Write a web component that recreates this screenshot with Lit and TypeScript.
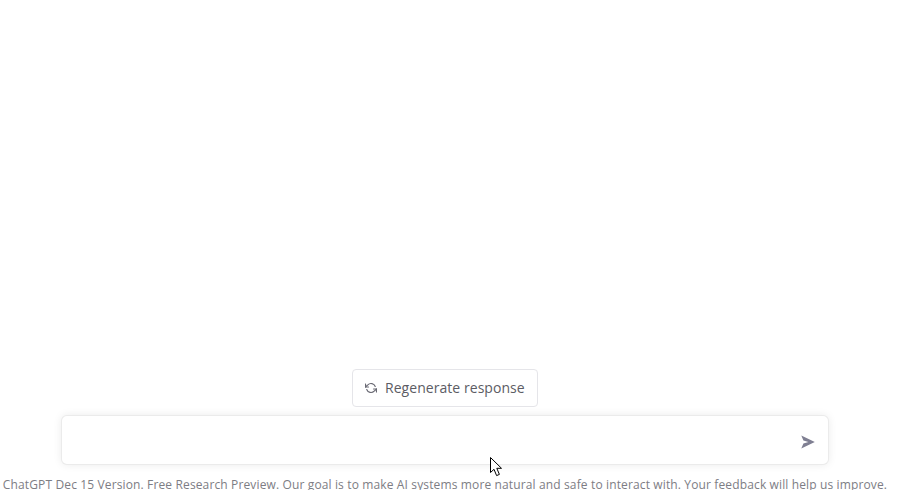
import { LitElement, html, css } from "lit";
import { customElement } from "lit/decorators.js";

@customElement("app-root")
export class AppRoot extends LitElement {
  static styles = css`
    :host {
      display: flex;
      flex-direction: column;
      align-items: center;
      position: relative;
      width: 897px;
      height: 490px;
      overflow: hidden;
      background: #fff;
      font-family: "Open Sans", "Noto Sans", sans-serif;
    }

    .spacer {
      flex: 1;
    }

    .regen {
      display: flex;
      align-items: center;
      gap: 8px;
      box-sizing: border-box;
      width: 186px;
      height: 38px;
      margin-left: -7px;
      padding: 0 12px;
      border: 1px solid #e5e5e9;
      border-radius: 4px;
      background: #fff;
      color: #5c5c64;
      font: inherit;
      font-size: 14px;
      letter-spacing: 0.05px;
      white-space: nowrap;
    }

    .regen span {
      margin-bottom: 2px;
    }

    .regen svg {
      flex: none;
      width: 12px;
      height: 12px;
      color: #6a6a74;
    }

    .input {
      display: flex;
      align-items: center;
      justify-content: flex-end;
      box-sizing: border-box;
      width: 768px;
      height: 50px;
      margin-top: 8px;
      margin-left: -7px;
      padding: 4px 13px 0 0;
      border: 1px solid rgba(0, 0, 0, 0.08);
      border-radius: 6px;
      background: #fff;
      box-shadow: 0 0 8px rgba(0, 0, 0, 0.08);
    }

    .input svg {
      width: 14px;
      height: 14px;
      color: #7f7f92;
    }

    .note {
      margin-top: 12px;
      height: 13px;
      color: #7d7d84;
      font-size: 12px;
      letter-spacing: 0.134px;
      line-height: 15px;
      white-space: nowrap;
      margin-left: -7px;
    }

    .cursor {
      position: absolute;
      left: 490px;
      top: 457px;
      width: 13px;
      height: 20px;
    }
  `;

  render() {
    return html`
      <div class="spacer"></div>
      <button class="regen">
        <svg viewBox="0 0 24 24" fill="none" stroke="currentColor" stroke-width="2.4" stroke-linecap="round" stroke-linejoin="round">
          <polyline points="1 4 1 10 7 10"></polyline>
          <polyline points="23 20 23 14 17 14"></polyline>
          <path d="M20.49 9A9 9 0 0 0 5.64 5.64L1 10m22 4l-4.64 4.36A9 9 0 0 1 3.51 15"></path>
        </svg>
        <span>Regenerate response</span>
      </button>
      <div class="input">
        <svg viewBox="0 0 14 14" fill="currentColor">
          <path d="M0.3 0.5 L13.8 7 L0.3 13.5 L2.4 8.6 L7.4 7 L2.4 5.4 Z"></path>
        </svg>
      </div>
      <div class="note">ChatGPT Dec 15 Version. Free Research Preview. Our goal is to make AI systems more natural and safe to interact with. Your feedback will help us improve.</div>
      <svg class="cursor" viewBox="0 0 13 20">
        <path d="M0.5 0.5 L0.5 15.5 L4 12.3 L6.6 18.6 L9.4 17.4 L6.8 11.3 L11.5 11.3 Z" fill="#fff" stroke="#000" stroke-width="1"></path>
      </svg>
    `;
  }
}
